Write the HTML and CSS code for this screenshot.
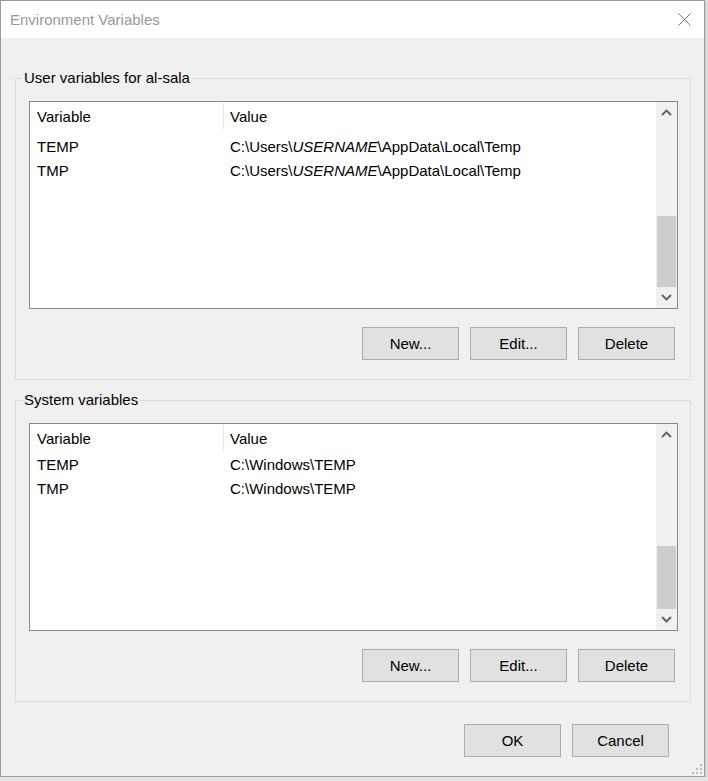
FILE: index.html
```html
<!DOCTYPE html>
<html lang="en">
<head>
<meta charset="utf-8">
<title>Environment Variables</title>
<link rel="stylesheet" href="styles.css">
</head>
<body>
<div class="window">
  <div class="titlebar">
    <span class="title">Environment Variables</span>
    <svg class="close" width="13" height="13" viewBox="0 0 13 13" aria-hidden="true">
      <path d="M0.5 0.5 L12.5 12.5 M12.5 0.5 L0.5 12.5" stroke="#767676" stroke-width="1" fill="none"/>
    </svg>
  </div>

  <div class="content">
    <fieldset class="group">
      <legend class="group-title">User variables for al-sala</legend>
      <div class="list">
        <div class="list-body">
          <div class="list-head">
            <div class="cell cell-name">Variable</div>
            <div class="cell cell-value cell-sep">Value</div>
          </div>
          <div class="rows rows-scrolled">
            <div class="row">
              <div class="cell cell-name">TEMP</div>
              <div class="cell cell-value">C:\Users\<i>USERNAME</i>\AppData\Local\Temp</div>
            </div>
            <div class="row">
              <div class="cell cell-name">TMP</div>
              <div class="cell cell-value">C:\Users\<i>USERNAME</i>\AppData\Local\Temp</div>
            </div>
          </div>
        </div>
        <div class="scrollbar">
          <div class="sb-btn">
            <svg width="11" height="7" viewBox="0 0 11 7"><polyline points="1,6 5.5,1.5 10,6" fill="none" stroke="#606060" stroke-width="1.8"/></svg>
          </div>
          <div class="sb-track"><div class="sb-thumb" style="height:71px"></div></div>
          <div class="sb-btn">
            <svg width="11" height="7" viewBox="0 0 11 7"><polyline points="1,1 5.5,5.5 10,1" fill="none" stroke="#606060" stroke-width="1.8"/></svg>
          </div>
        </div>
      </div>
      <div class="btn-row">
        <button class="btn">New...</button>
        <button class="btn">Edit...</button>
        <button class="btn">Delete</button>
      </div>
    </fieldset>

    <fieldset class="group group-second">
      <legend class="group-title">System variables</legend>
      <div class="list">
        <div class="list-body">
          <div class="list-head">
            <div class="cell cell-name">Variable</div>
            <div class="cell cell-value cell-sep">Value</div>
          </div>
          <div class="rows">
            <div class="row">
              <div class="cell cell-name">TEMP</div>
              <div class="cell cell-value">C:\Windows\TEMP</div>
            </div>
            <div class="row">
              <div class="cell cell-name">TMP</div>
              <div class="cell cell-value">C:\Windows\TEMP</div>
            </div>
          </div>
        </div>
        <div class="scrollbar">
          <div class="sb-btn">
            <svg width="11" height="7" viewBox="0 0 11 7"><polyline points="1,6 5.5,1.5 10,6" fill="none" stroke="#606060" stroke-width="1.8"/></svg>
          </div>
          <div class="sb-track"><div class="sb-thumb" style="height:63px"></div></div>
          <div class="sb-btn">
            <svg width="11" height="7" viewBox="0 0 11 7"><polyline points="1,1 5.5,5.5 10,1" fill="none" stroke="#606060" stroke-width="1.8"/></svg>
          </div>
        </div>
      </div>
      <div class="btn-row">
        <button class="btn">New...</button>
        <button class="btn">Edit...</button>
        <button class="btn">Delete</button>
      </div>
    </fieldset>

    <div class="footer">
      <button class="btn">OK</button>
      <button class="btn">Cancel</button>
    </div>
  </div>

  <svg class="grip" width="10" height="10" viewBox="0 0 10 10" aria-hidden="true">
    <rect x="8" y="0" width="2" height="2" fill="#bcbcbc"/>
    <rect x="4" y="4" width="2" height="2" fill="#bcbcbc"/>
    <rect x="8" y="4" width="2" height="2" fill="#bcbcbc"/>
    <rect x="0" y="8" width="2" height="2" fill="#bcbcbc"/>
    <rect x="4" y="8" width="2" height="2" fill="#bcbcbc"/>
    <rect x="8" y="8" width="2" height="2" fill="#bcbcbc"/>
  </svg>
</div>
</body>
</html>
```

FILE: styles.css
```css
html {
  background: #e4e4e4;
}
body {
  margin: 0;
  font-family: "Liberation Sans", Arial, sans-serif;
  font-size: 15px;
  line-height: 20px;
  color: #000;
}
.window {
  position: relative;
  width: 705px;
  height: 777px;
  box-sizing: border-box;
  border: 1px solid #9a9a9a;
  background: #f0f0f0;
  display: flex;
  flex-direction: column;
  box-shadow: 0 1px 3px rgba(0, 0, 0, 0.25);
}
.titlebar {
  height: 37px;
  flex: none;
  background: #fff;
  display: flex;
  align-items: center;
  justify-content: space-between;
  padding: 0 13px 0 9px;
}
.title {
  color: #999;
  font-size: 15px;
}
.close {
  display: block;
  margin-top: -1px;
}
.content {
  flex: 1;
  display: flex;
  flex-direction: column;
  padding: 30px 13px 0 14px;
}
.group {
  margin: 0;
  min-width: 0;
  border: 1px solid #dcdcdc;
  padding: 13px 12px 19px 13px;
}
.group-second {
  margin-top: 10px;
}
.group-title {
  margin-left: -7px;
  padding: 0 2px;
  line-height: 20px;
}
.list {
  height: 208px;
  box-sizing: border-box;
  border: 1px solid #828790;
  background: #fff;
  display: flex;
}
.list-body {
  flex: 1;
  min-width: 0;
}
.list-head {
  display: grid;
  grid-template-columns: 193px 1fr;
  height: 27px;
  align-items: center;
}
.list-head .cell-sep {
  border-left: 1px solid #e5e5e5;
  height: 26px;
  line-height: 24px;
  padding-top: 2px;
  box-sizing: border-box;
  padding-left: 6px;
  align-self: end;
}
.rows {
  padding-top: 1px;
}
.rows-scrolled {
  padding-top: 5px;
}
.row {
  display: grid;
  grid-template-columns: 193px 1fr;
  height: 24px;
  align-items: center;
}
.cell {
  white-space: nowrap;
  padding-top: 2px;
}
.cell-name {
  padding-left: 7px;
}
.cell-value {
  padding-left: 7px;
}
.cell-value i {
  font-style: italic;
}
.scrollbar {
  width: 21px;
  flex: none;
  background: #f0f0f0;
  display: flex;
  flex-direction: column;
}
.sb-btn {
  height: 21px;
  flex: none;
  display: flex;
  align-items: center;
  justify-content: center;
}
.sb-track {
  flex: 1;
  display: flex;
  flex-direction: column;
  justify-content: flex-end;
}
.sb-thumb {
  margin: 0 1px;
  background: #cdcdcd;
}
.btn-row {
  display: flex;
  justify-content: flex-end;
  gap: 11px;
  margin-top: 18px;
  padding-right: 3px;
}
.btn {
  width: 97px;
  height: 33px;
  box-sizing: border-box;
  margin: 0;
  padding: 0;
  background: #e1e1e1;
  border: 1px solid #adadad;
  border-radius: 0;
  font-family: "Liberation Sans", Arial, sans-serif;
  font-size: 15px;
  color: #000;
}
.footer {
  display: flex;
  justify-content: flex-end;
  gap: 11px;
  margin-top: 22px;
  padding-right: 22px;
}
.grip {
  position: absolute;
  right: 2px;
  bottom: 2px;
}
```
